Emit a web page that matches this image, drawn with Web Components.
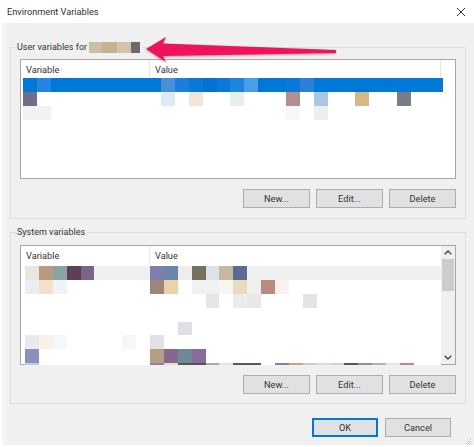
<!DOCTYPE html>
<html>
<head>
<meta charset="utf-8">
<title>Environment Variables</title>
<style>
  html, body { margin: 0; padding: 0; background: #fff; }
  body { font: 9.2px Roboto, "Open Sans", sans-serif; color: #333; }
</style>
</head>
<body>

<env-dialog heading="Environment Variables">
  <env-group label="User variables for" style="--label-gap: 4px">
    <env-mosaic slot="after-label"></env-mosaic>
    <env-list val-x="138" var-x="2" right-gap="12" header-h="18" divider-end>
      <env-row selected vars="1:2584e4" vals="0:4a8ed6,1:1a7fdc,2:0a78d8,3:0572d2,4:0a78d8,5:1f84de,6:4a9ee8,9:0a78d8,10:2a80d6"></env-row>
      <env-row vars="0:6b7088" vals="0:deebf5,2:f2e6dc,5:e6efe9,9:b38e90,11:abc7df,14:d8b787,17:767f88"></env-row>
      <env-row vars="0:f2f2f4,1:f2f2f4" vals="9:f8f7f7,11:efeeef"></env-row>
    </env-list>
    <win-button>New...</win-button>
    <win-button>Edit...</win-button>
    <win-button>Delete</win-button>
  </env-group>

  <env-group label="System variables" style="--label-gap: 5px">
    <env-list val-x="125" var-x="4" right-gap="0" header-h="20" head-lift="2" scrollbar>
      <env-row shaded vars="0:e9e6e0,1:b49b82,2:8aa5a0,3:5f3f58,4:7b6486" vals="0:7d7fae,1:6a86ab,2:ededed,3:74715e,4:d8e4ea,5:c5b9a1,6:5d6a92"></env-row>
      <env-row vars="0:e8eff8,1:f5dfc8,2:edf3f8" vals="0:9b8778,1:e8d3aa,2:fefefc,3:f1f1f5,4:eff1f4,5:f8f5f0,6:e8dcc0,7:efefef,8:b78b7f,9:f8f3f0"></env-row>
      <env-row vals="4:e6e6ea,6:ececec,7:e8e8e8,11:e4e4e4"></env-row>
      <env-row></env-row>
      <env-row vals="2:dfdfe6"></env-row>
      <env-row vars="0:e8eaec,1:f8f0ea,2:f4f7fb,7:f5f8fb" vals="0:e2e2e2"></env-row>
      <env-row vars="0:8b91bd" vals="0:b59f81,1:87678f,2:6f8895,3:8a6c98"></env-row>
      <env-row sliver vars="0:c8c8d8" vals="0:8d80a0,1:e8dcc8,2:4f5560,3:5c5060,4:aaaaaa,5:e0e4e4,6:5f5560,7:5f5560,9:7d83a5,10:c0a58c,11:c4d0d4,12:d4dde0,13:dcd0c4,14:5e5850,15:a08a84,16:a4b8bc,17:e0e8e4,18:b09080"></env-row>
    </env-list>
    <win-button>New...</win-button>
    <win-button>Edit...</win-button>
    <win-button>Delete</win-button>
  </env-group>

  <win-button slot="footer" width="66" primary>OK</win-button>
  <win-button slot="footer" width="66">Cancel</win-button>
</env-dialog>

<script>
// the dialog frame: title bar, grey client area, footer buttons, arrow on top
const dialogTemplate = document.createElement('template')
dialogTemplate.innerHTML = `
  <style>
    :host { display: block; position: relative; width: 474px; height: 447px; overflow: hidden; }
    .title { display: flex; align-items: center; justify-content: space-between; height: 23px; padding: 0 8px 0 7px; box-sizing: border-box; background: #fff; }
    .title svg { display: block; }
    .client { height: 422px; box-sizing: border-box; margin-left: 2px; border-left: 5px solid #f4f4f4; padding: 24px 0 0 3px; background: #f0f0f0; }
    .stack { display: flex; flex-direction: column; gap: 13px; width: 456px; }
    .footer { display: flex; justify-content: flex-end; gap: 7px; margin-top: 14px; padding-right: 23px; }
    .arrow { position: absolute; left: 140px; top: 30px; filter: drop-shadow(0.5px 1.5px 1px rgba(60,0,20,.35)); }
    .grip { position: absolute; right: 2px; bottom: 2px; }
  </style>
  <div class="title">
    <span id="heading"></span>
    <svg width="10" height="10" viewBox="0 0 10 10"><path d="M1 1 9 9M9 1 1 9" stroke="#333" stroke-width="1" fill="none"/></svg>
  </div>
  <div class="client">
    <div class="stack"><slot></slot></div>
    <div class="footer"><slot name="footer"></slot></div>
  </div>
  <svg class="arrow" width="205" height="40" viewBox="140 30 205 40">
    <polygon points="146,49 166,37 163,43.5 336,50 336,53 163,56 166,62" fill="#f0125c"/>
  </svg>
  <svg class="grip" width="6" height="6" viewBox="0 0 6 6" fill="#b4b4b4">
    <rect x="4" y="0" width="1" height="1"/><rect x="2" y="2" width="1" height="1"/><rect x="4" y="2" width="1" height="1"/>
    <rect x="0" y="4" width="1" height="1"/><rect x="2" y="4" width="1" height="1"/><rect x="4" y="4" width="1" height="1"/>
  </svg>
`
class EnvDialog extends HTMLElement {
  constructor() {
    super()
    this.attachShadow({ mode: 'open' })
    this.shadowRoot.appendChild(dialogTemplate.content.cloneNode(true))
    this.shadowRoot.querySelector('#heading').textContent = this.getAttribute('heading')
  }
}
customElements.define('env-dialog', EnvDialog)

// etched group box, the label sits on the top line like a legend
const groupTemplate = document.createElement('template')
groupTemplate.innerHTML = `
  <style>
    :host { display: block; box-sizing: border-box; height: 172px; border: 1px solid #dcdcdc; padding: 0 9px 0 9px; }
    .legend { display: flex; align-items: center; width: max-content; height: 16px; margin: -9px 0 var(--label-gap, 3px) -3px; background: #f0f0f0; padding-right: 2px; font-size: 9px; }
    .buttons { display: flex; justify-content: flex-end; gap: 6px; margin-top: 10px; }
  </style>
  <div class="legend"><span id="label"></span><slot name="after-label"></slot></div>
  <slot id="list"></slot>
  <div class="buttons"><slot name="buttons"></slot></div>
`
class EnvGroup extends HTMLElement {
  constructor() {
    super()
    this.attachShadow({ mode: 'open' })
    this.shadowRoot.appendChild(groupTemplate.content.cloneNode(true))
    this.shadowRoot.querySelector('#label').textContent = this.getAttribute('label')
  }
  connectedCallback() {
    // buttons go in the row under the list
    this.querySelectorAll(':scope > win-button').forEach(b => b.slot = 'buttons')
  }
}
customElements.define('env-group', EnvGroup)

// the blurred-out user name next to the group label
const mosaicTemplate = document.createElement('template')
mosaicTemplate.innerHTML = `
  <style>
    :host { display: flex; height: 11px; margin: 1px 0 0 2px; }
    i { display: block; height: 100%; }
  </style>
  <i style="width:13px;background:#c9bfa9"></i>
  <i style="width:15px;background:#c9b18b"></i>
  <i style="width:14px;background:#d3c2ae"></i>
  <i style="width:9px;background:#6c6a66"></i>
`
class EnvMosaic extends HTMLElement {
  constructor() {
    super()
    this.attachShadow({ mode: 'open' })
    this.shadowRoot.appendChild(mosaicTemplate.content.cloneNode(true))
  }
}
customElements.define('env-mosaic', EnvMosaic)

// list view with a Variable / Value header and an optional scrollbar
const listTemplate = document.createElement('template')
listTemplate.innerHTML = `
  <style>
    :host { display: flex; box-sizing: border-box; height: 120px; border: 1px solid #a6a6a6; background: #fff; }
    .main { flex: 1; min-width: 0; }
    .head { display: flex; align-items: center; background: #fff; position: relative; }
    .head span { padding-left: 5px; }
    .head .a { width: 129px; box-sizing: border-box; border-right: 1px solid #e5e5e5; height: 100%; display: flex; align-items: center; }
    .head .b { flex: 1; height: 100%; display: flex; align-items: center; }
    .head .c { width: 15px; height: 100%; box-sizing: border-box; border-left: 1px solid #e5e5e5; display: none; }
    .rows { display: block; }
    .bar { display: none; flex-direction: column; width: 14px; background: #f0f0f0; }
    .bar .btn { height: 13px; display: flex; align-items: center; justify-content: center; }
    .bar .track { flex: 1; }
    .bar .thumb { height: 32px; margin: 0 1px; background: #cdcdcd; }
  </style>
  <div class="main">
    <div class="head">
      <div class="a"><span>Variable</span></div>
      <div class="b"><span>Value</span></div>
      <div class="c"></div>
    </div>
    <div class="rows"><slot></slot></div>
  </div>
  <div class="bar">
    <div class="btn"><svg width="8" height="5" viewBox="0 0 8 5"><path d="M.7 4.3 4 1l3.3 3.3" fill="none" stroke="#444" stroke-width="1.3"/></svg></div>
    <div class="thumb"></div>
    <div class="track"></div>
    <div class="btn"><svg width="8" height="5" viewBox="0 0 8 5"><path d="M.7.7 4 4 7.3.7" fill="none" stroke="#444" stroke-width="1.3"/></svg></div>
  </div>
`
class EnvList extends HTMLElement {
  constructor() {
    super()
    this.attachShadow({ mode: 'open' })
    this.shadowRoot.appendChild(listTemplate.content.cloneNode(true))
    const root = this.shadowRoot
    const head = root.querySelector('.head')
    head.style.height = this.getAttribute('header-h') + 'px'
    if (this.hasAttribute('head-lift')) {
      head.querySelectorAll('span').forEach(s => s.style.paddingBottom = this.getAttribute('head-lift') + 'px')
    }
    root.querySelector('.rows').style.padding = `0 ${this.getAttribute('right-gap')}px 0 ${this.getAttribute('var-x')}px`
    this.style.setProperty('--val-x', this.getAttribute('val-x') + 'px')
    if (this.hasAttribute('scrollbar')) root.querySelector('.bar').style.display = 'flex'
    if (this.hasAttribute('divider-end')) root.querySelector('.c').style.display = 'block'
  }
}
customElements.define('env-list', EnvList)

// one row; vars / vals are "column:colour" lists for the pixelated cells
const rowTemplate = document.createElement('template')
rowTemplate.innerHTML = `
  <style>
    :host { display: grid; grid-template-columns: var(--val-x) 1fr; height: 13.9px; }
    :host([selected]) { background: #0078d7; }
    :host([shaded]) { background: #f0f0f0; }
    :host([sliver]) { height: 2px; background: #fff; }
    .cells { display: grid; grid-template-columns: repeat(22, 13.9px); grid-template-rows: 100%; height: 100%; min-width: 0; }
    i { display: block; }
  </style>
  <div class="cells" id="vars"></div>
  <div class="cells" id="vals"></div>
`
class EnvRow extends HTMLElement {
  constructor() {
    super()
    this.attachShadow({ mode: 'open' })
    this.shadowRoot.appendChild(rowTemplate.content.cloneNode(true))
    this.fill('vars')
    this.fill('vals')
  }
  fill(name) {
    const box = this.shadowRoot.querySelector('#' + name)
    const list = this.getAttribute(name)
    if (!list) return
    list.split(',').forEach(pair => {
      const [col, colour] = pair.split(':')
      const cell = document.createElement('i')
      cell.style.gridColumn = Number(col) + 1
      cell.style.gridRow = 1
      cell.style.background = '#' + colour
      box.appendChild(cell)
    })
  }
}
customElements.define('env-row', EnvRow)

// classic win10 push button
const buttonTemplate = document.createElement('template')
buttonTemplate.innerHTML = `
  <style>
    :host { display: flex; align-items: center; justify-content: center; box-sizing: border-box; width: 67px; height: 19px; background: #e1e1e1; border: 1px solid #adadad; }
    :host([primary]) { border: 2px solid #0078d7; }
  </style>
  <slot></slot>
`
class WinButton extends HTMLElement {
  constructor() {
    super()
    this.attachShadow({ mode: 'open' })
    this.shadowRoot.appendChild(buttonTemplate.content.cloneNode(true))
    if (this.hasAttribute('width')) this.style.width = this.getAttribute('width') + 'px'
  }
}
customElements.define('win-button', WinButton)
</script>
</body>
</html>
